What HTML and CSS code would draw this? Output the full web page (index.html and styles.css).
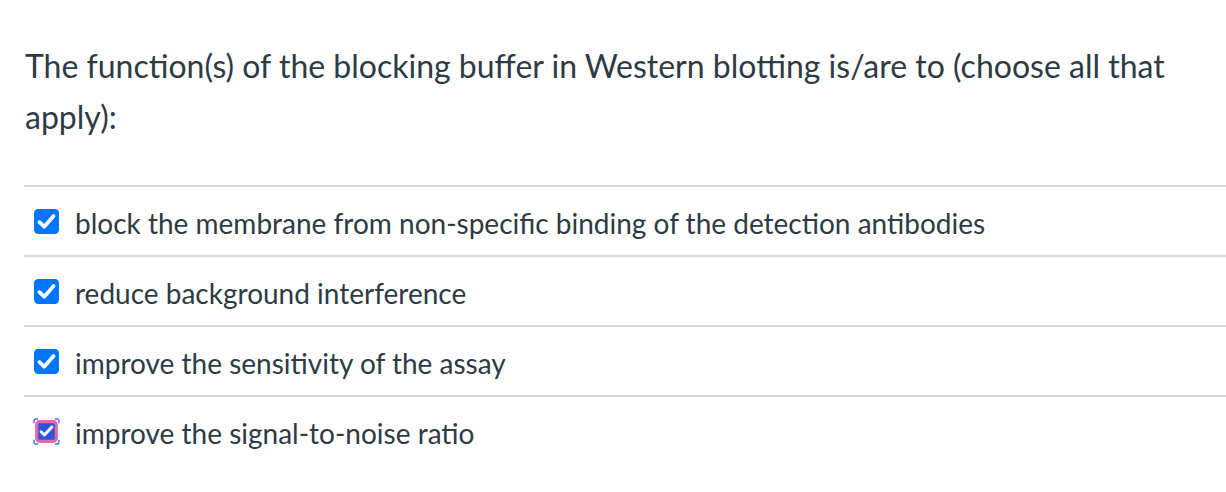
FILE: index.html
```html
<!DOCTYPE html>
<html>
<head>
<meta charset="utf-8">
<link rel="stylesheet" href="styles.css">
</head>
<body>
<div class="question">
  <div class="prompt">The function(s) of the blocking buffer in Western blotting is/are to (choose all that apply):</div>
  <div class="answers">
    <div class="answer">
      <span class="box"><svg viewBox="0 0 24 24" width="25" height="25"><rect x="0" y="0" width="24" height="24" rx="4" fill="#0075ff"/><path d="M5.2 12.6 L9.8 17 L18.8 6.8" fill="none" stroke="#fff" stroke-width="3.6" stroke-linecap="round" stroke-linejoin="round"/></svg></span>
      <span class="label">block the membrane from non-specific binding of the detection antibodies</span>
    </div>
    <div class="answer">
      <span class="box"><svg viewBox="0 0 24 24" width="25" height="25"><rect x="0" y="0" width="24" height="24" rx="4" fill="#0075ff"/><path d="M5.2 12.6 L9.8 17 L18.8 6.8" fill="none" stroke="#fff" stroke-width="3.6" stroke-linecap="round" stroke-linejoin="round"/></svg></span>
      <span class="label">reduce background interference</span>
    </div>
    <div class="answer">
      <span class="box"><svg viewBox="0 0 24 24" width="25" height="25"><rect x="0" y="0" width="24" height="24" rx="4" fill="#0075ff"/><path d="M5.2 12.6 L9.8 17 L18.8 6.8" fill="none" stroke="#fff" stroke-width="3.6" stroke-linecap="round" stroke-linejoin="round"/></svg></span>
      <span class="label">improve the sensitivity of the assay</span>
    </div>
    <div class="answer">
      <span class="box"><svg viewBox="0 0 26 26" width="27" height="27"><path d="M1 5 V3 Q1 1 3 1 H5 M21 1 H23 Q25 1 25 3 V5 M25 21 V23 Q25 25 23 25 H21 M5 25 H3 Q1 25 1 23 V21" fill="none" stroke="#2d7ff9" stroke-width="1.4"/><rect x="3.5" y="3.5" width="19" height="19" rx="3" fill="#2e55d8" stroke="#e467a8" stroke-width="3"/><path d="M7.8 13.2 L11 16.4 L18.2 8.6" fill="none" stroke="#fff" stroke-width="2.8" stroke-linecap="round" stroke-linejoin="round"/></svg></span>
      <span class="label">improve the signal-to-noise ratio</span>
    </div>
  </div>
</div>
</body>
</html>
```

FILE: styles.css
```css
html, body {
  margin: 0;
  padding: 0;
  background: #ffffff;
}
body {
  font-family: Lato, "Noto Sans", sans-serif;
  color: #2d3b45;
}
.question {
  padding: 40px 0 0 24px;
}
.prompt {
  font-size: 32px;
  line-height: 51px;
  padding-left: 1px;
  padding-right: 40px;
  margin-bottom: 43px;
}
.answers {
  display: flex;
  flex-direction: column;
}
.answer {
  display: flex;
  align-items: center;
  height: 68px;
  border-top: 2px solid #d9d9d9;
}
.box {
  width: 27px;
  height: 27px;
  margin-left: 9px;
  margin-right: 15px;
  display: flex;
  align-items: center;
  justify-content: center;
}
.box svg {
  display: block;
}
.label {
  font-size: 28px;
  line-height: 30px;
  position: relative;
  top: 2px;
}
```
